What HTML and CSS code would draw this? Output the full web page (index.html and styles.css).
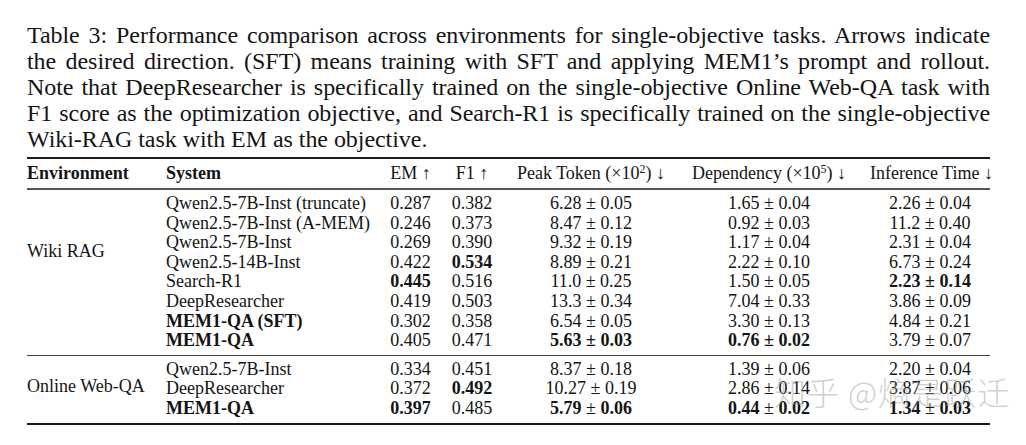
FILE: index.html
```html
<!DOCTYPE html>
<html lang="en">
<head>
<meta charset="utf-8">
<title>Table 3</title>
<link rel="stylesheet" href="styles.css">
</head>
<body>
<div class="page">
  <p class="caption">Table 3: Performance comparison across environments for single-objective tasks. Arrows indicate the desired direction. (SFT) means training with SFT and applying MEM1’s prompt and rollout. Note that DeepResearcher is specifically trained on the single-objective Online Web-QA task with F1 score as the optimization objective, and Search-R1 is specifically trained on the single-objective Wiki-RAG task with EM as the objective.</p>
  <table class="results">
    <colgroup>
      <col class="c-env"><col class="c-sys"><col class="c-em"><col class="c-f1"><col class="c-peak"><col class="c-dep"><col class="c-inf">
    </colgroup>
    <thead>
      <tr>
        <th class="env">Environment</th>
        <th class="sys">System</th>
        <th class="num">EM ↑</th>
        <th class="num">F1 ↑</th>
        <th class="num">Peak Token (×10<sup>2</sup>) ↓</th>
        <th class="num">Dependency (×10<sup>5</sup>) ↓</th>
        <th class="num inf">Inference Time ↓</th>
      </tr>
    </thead>
    <tbody class="group">
      <tr class="first">
        <td class="env" rowspan="8"><div class="env-label wiki">Wiki RAG</div></td>
        <td class="sys">Qwen2.5-7B-Inst (truncate)</td>
        <td class="num">0.287</td><td class="num">0.382</td>
        <td class="num">6.28 ± 0.05</td><td class="num">1.65 ± 0.04</td><td class="num inf">2.26 ± 0.04</td>
      </tr>
      <tr>
        <td class="sys">Qwen2.5-7B-Inst (A-MEM)</td>
        <td class="num">0.246</td><td class="num">0.373</td>
        <td class="num">8.47 ± 0.12</td><td class="num">0.92 ± 0.03</td><td class="num inf">11.2 ± 0.40</td>
      </tr>
      <tr>
        <td class="sys">Qwen2.5-7B-Inst</td>
        <td class="num">0.269</td><td class="num">0.390</td>
        <td class="num">9.32 ± 0.19</td><td class="num">1.17 ± 0.04</td><td class="num inf">2.31 ± 0.04</td>
      </tr>
      <tr>
        <td class="sys">Qwen2.5-14B-Inst</td>
        <td class="num">0.422</td><td class="num"><b>0.534</b></td>
        <td class="num">8.89 ± 0.21</td><td class="num">2.22 ± 0.10</td><td class="num inf">6.73 ± 0.24</td>
      </tr>
      <tr>
        <td class="sys">Search-R1</td>
        <td class="num"><b>0.445</b></td><td class="num">0.516</td>
        <td class="num">11.0 ± 0.25</td><td class="num">1.50 ± 0.05</td><td class="num inf"><b>2.23 ± 0.14</b></td>
      </tr>
      <tr>
        <td class="sys">DeepResearcher</td>
        <td class="num">0.419</td><td class="num">0.503</td>
        <td class="num">13.3 ± 0.34</td><td class="num">7.04 ± 0.33</td><td class="num inf">3.86 ± 0.09</td>
      </tr>
      <tr>
        <td class="sys"><b>MEM1-QA (SFT)</b></td>
        <td class="num">0.302</td><td class="num">0.358</td>
        <td class="num">6.54 ± 0.05</td><td class="num">3.30 ± 0.13</td><td class="num inf">4.84 ± 0.21</td>
      </tr>
      <tr class="last">
        <td class="sys"><b>MEM1-QA</b></td>
        <td class="num">0.405</td><td class="num">0.471</td>
        <td class="num"><b>5.63 ± 0.03</b></td><td class="num"><b>0.76 ± 0.02</b></td><td class="num inf">3.79 ± 0.07</td>
      </tr>
    </tbody>
    <tbody class="group">
      <tr class="first">
        <td class="env" rowspan="3"><div class="env-label web">Online Web-QA</div></td>
        <td class="sys">Qwen2.5-7B-Inst</td>
        <td class="num">0.334</td><td class="num">0.451</td>
        <td class="num">8.37 ± 0.18</td><td class="num">1.39 ± 0.06</td><td class="num inf">2.20 ± 0.04</td>
      </tr>
      <tr>
        <td class="sys">DeepResearcher</td>
        <td class="num">0.372</td><td class="num"><b>0.492</b></td>
        <td class="num">10.27 ± 0.19</td><td class="num">2.86 ± 0.14</td><td class="num inf">3.87 ± 0.06</td>
      </tr>
      <tr class="last">
        <td class="sys"><b>MEM1-QA</b></td>
        <td class="num"><b>0.397</b></td><td class="num">0.485</td>
        <td class="num"><b>5.79</b> ± <b>0.06</b></td><td class="num"><b>0.44</b> ± <b>0.02</b></td><td class="num inf"><b>1.34</b> ± <b>0.03</b></td>
      </tr>
    </tbody>
  </table>
  <div class="watermark">知乎 @熵是跃迁</div>
</div>
</body>
</html>
```

FILE: styles.css
```css
html, body {
  margin: 0;
  padding: 0;
  background: #ffffff;
}

body {
  color: #141414;
  font-family: "Liberation Serif", "Times New Roman", serif;
}

.page {
  position: relative;
  width: 963px;
  margin-left: 27px;
  padding-top: 22px;
}

.caption {
  margin: 0 0 5px 0;
  font-size: 24px;
  line-height: 26px;
  text-align: justify;
  letter-spacing: -0.05px;
}

.results {
  width: 963px;
  table-layout: fixed;
  border-collapse: collapse;
  font-size: 18px;
  line-height: 19.6px;
  border-top: 2px solid #1a1a1a;
  border-bottom: 2px solid #1a1a1a;
}

.c-env { width: 133px; }
.c-sys { width: 221px; }
.c-em { width: 59px; }
.c-f1 { width: 64px; }
.c-peak { width: 174px; }
.c-dep { width: 182px; }
.c-inf { width: 130px; }

.results th,
.results td {
  padding: 0;
  white-space: nowrap;
  font-weight: normal;
}

.results thead th {
  height: 29px;
  vertical-align: middle;
  border-bottom: 2px solid #555;
}

.results thead th.env,
.results thead th.sys {
  font-weight: bold;
}

.results sup {
  font-size: 12px;
  line-height: 0;
  vertical-align: 6px;
}

.env { text-align: left; }
.sys { text-align: left; padding-left: 6px !important; }
.num { text-align: center; }
.inf { padding-left: 10px !important; }

.results td.env {
  vertical-align: top;
}

.env-label.wiki { padding-top: 52px; }
.env-label.web { padding-top: 21px; }

.group + .group {
  border-top: 1.5px solid #444;
}

.results tr.first td { padding-top: 4px; }
.results tr.last td { padding-bottom: 4px; }
.results tr.first td.env { padding-top: 0; }

.watermark {
  position: absolute;
  left: 747px;
  top: 372px;
  font-family: "Noto Sans CJK SC", sans-serif;
  font-weight: 300;
  font-size: 32px;
  line-height: 38px;
  color: rgba(150, 150, 150, 0.45);
  white-space: nowrap;
  letter-spacing: 1px;
}
```
